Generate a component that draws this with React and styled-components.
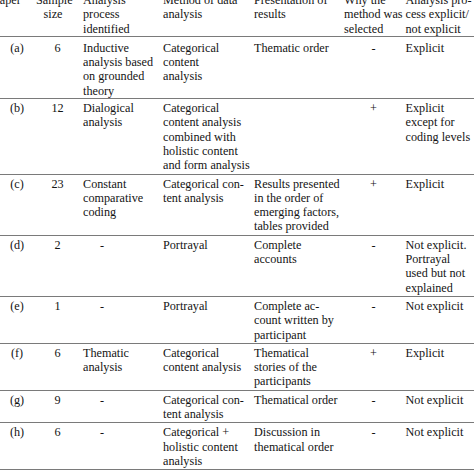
import React from "react";
import styled, { createGlobalStyle } from "styled-components";

const GlobalStyle = createGlobalStyle`
  html, body {
    margin: 0;
    padding: 0;
    background: #fff;
    overflow: hidden;
  }
`;

const Page = styled.div`
  width: 474px;
  height: 474px;
  overflow: hidden;
  background: #fff;
`;

const Table = styled.table`
  margin: -9px 0 0 -7px;
  border-collapse: collapse;
  table-layout: fixed;
  width: 489px;
  font-family: "Liberation Serif", "Times New Roman", serif;
  font-size: 12.2px;
  line-height: 14.3px;
  color: #141414;
`;

const Row = styled.tr`
  border-bottom: 1.5px solid #7a7a7a;
`;

const HeadCell = styled.th`
  font-weight: normal;
  vertical-align: top;
  white-space: nowrap;
  padding: 2px 0 0 ${(p) => p.$left || 0}px;
  padding-right: ${(p) => p.$right || 0}px;
  text-align: ${(p) => p.$align || "left"};
`;

const Cell = styled.td`
  vertical-align: top;
  white-space: nowrap;
  padding-top: ${(p) => (p.$first ? 4 : 2)}px;
  padding-bottom: ${(p) => (p.$first ? 0 : 1)}px;
  padding-left: ${(p) => p.$left || 0}px;
  text-align: ${(p) => p.$align || "left"};
`;

// widths and indents per column, measured off the reference
const columns = [
  { width: 43, head: { left: 0 }, body: { left: 6, align: "center" } },
  { width: 44, head: { right: 10, align: "center" }, body: { align: "center" } },
  { width: 80, head: { left: 3 }, body: { left: 3 }, dash: 20 },
  { width: 90, head: { left: 3 }, body: { left: 3 } },
  { width: 90, head: { left: 4 }, body: { left: 4 } },
  { width: 62, head: { left: 4 }, body: { left: 6, align: "center" } },
  { width: 80, head: { left: 3.5 }, body: { left: 3.5 } },
];

const header = [
  ["Paper"],
  ["Sample", "size"],
  ["Analysis", "process", "identified"],
  ["Method of data", "analysis"],
  ["Presentation of", "results"],
  ["Why the", "method was", "selected"],
  ["Analysis pro-", "cess explicit/", "not explicit"],
];

const rows = [
  [
    "(a)",
    "6",
    ["Inductive", "analysis based", "on grounded", "theory"],
    ["Categorical", "content", "analysis"],
    ["Thematic order"],
    "-",
    ["Explicit"],
  ],
  [
    "(b)",
    "12",
    ["Dialogical", "analysis"],
    ["Categorical", "content analysis", "combined with", "holistic content", "and form analysis"],
    [],
    "+",
    ["Explicit", "except for", "coding levels"],
  ],
  [
    "(c)",
    "23",
    ["Constant", "comparative", "coding"],
    ["Categorical con-", "tent analysis"],
    ["Results presented", "in the order of", "emerging factors,", "tables provided"],
    "+",
    ["Explicit"],
  ],
  [
    "(d)",
    "2",
    "-",
    ["Portrayal"],
    ["Complete", "accounts"],
    "-",
    ["Not explicit.", "Portrayal", "used but not", "explained"],
  ],
  [
    "(e)",
    "1",
    "-",
    ["Portrayal"],
    ["Complete ac-", "count written by", "participant"],
    "-",
    ["Not explicit"],
  ],
  [
    "(f)",
    "6",
    ["Thematic", "analysis"],
    ["Categorical", "content analysis"],
    ["Thematical", "stories of the", "participants"],
    "+",
    ["Explicit"],
  ],
  [
    "(g)",
    "9",
    "-",
    ["Categorical con-", "tent analysis"],
    ["Thematical order"],
    "-",
    ["Not explicit"],
  ],
  [
    "(h)",
    "6",
    "-",
    ["Categorical +", "holistic content", "analysis"],
    ["Discussion in", "thematical order"],
    "-",
    ["Not explicit"],
  ],
];

const Lines = ({ lines }) => {
  const list = Array.isArray(lines) ? lines : [lines];
  return list.map((line, i) => (
    <React.Fragment key={i}>
      {i > 0 && <br />}
      {line}
    </React.Fragment>
  ));
};

export default function App() {
  return (
    <Page>
      <GlobalStyle />
      <Table>
        <colgroup>
          {columns.map((c, i) => (
            <col key={i} style={{ width: c.width }} />
          ))}
        </colgroup>
        <thead>
          <Row>
            {header.map((lines, i) => (
              <HeadCell
                key={i}
                $left={columns[i].head.left}
                $right={columns[i].head.right}
                $align={columns[i].head.align}
              >
                <Lines lines={lines} />
              </HeadCell>
            ))}
          </Row>
        </thead>
        <tbody>
          {rows.map((row, r) => (
            <Row key={r}>
              {row.map((value, i) => {
                const col = columns[i];
                const isDash = value === "-" && col.dash;
                return (
                  <Cell
                    key={i}
                    $first={r === 0}
                    $left={isDash ? col.dash : col.body.left}
                    $align={col.body.align}
                  >
                    <Lines lines={value} />
                  </Cell>
                );
              })}
            </Row>
          ))}
        </tbody>
      </Table>
    </Page>
  );
}
